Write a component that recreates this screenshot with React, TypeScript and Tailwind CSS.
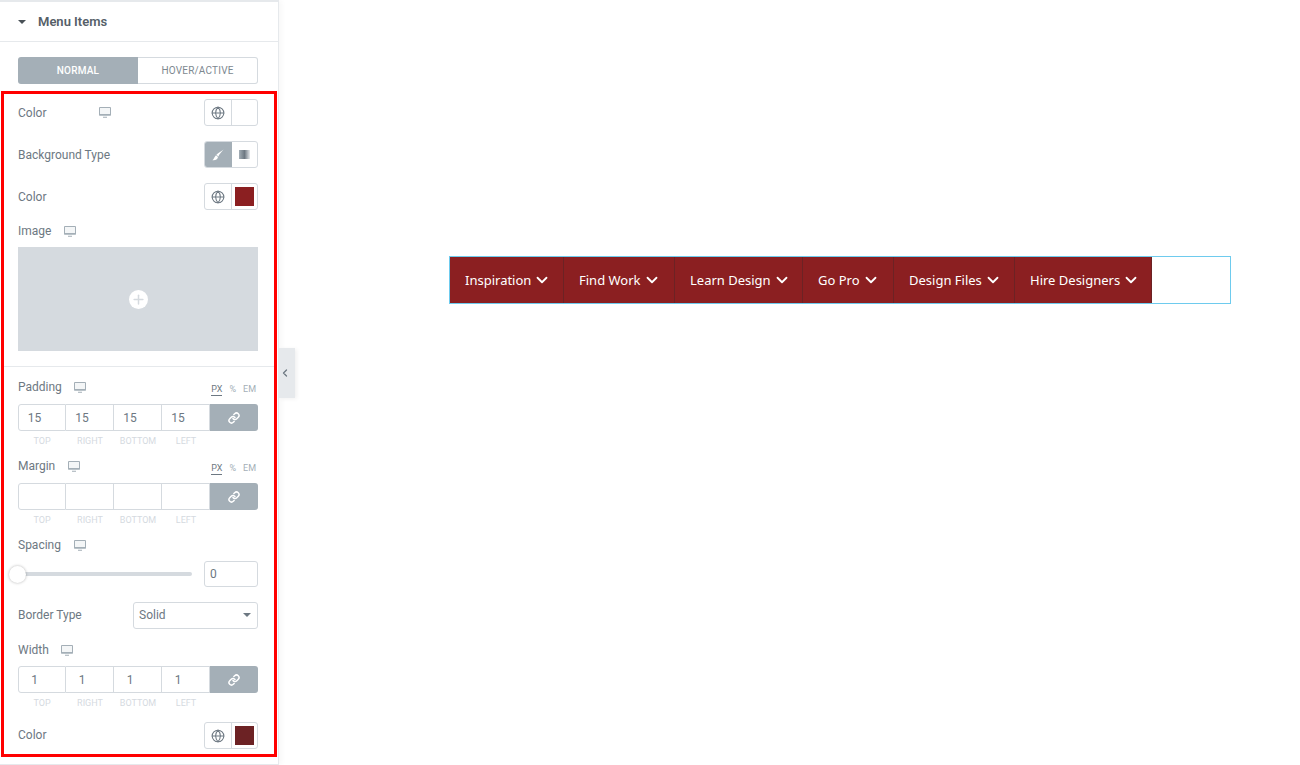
import { ChevronDown, ChevronLeft, Globe, Link as LinkIcon, Plus } from 'lucide-react';

const navItems = [
    { label: 'Inspiration', width: 'w-[114px]' },
    { label: 'Find Work', width: 'w-[111px]' },
    { label: 'Learn Design', width: 'w-[128px]' },
    { label: 'Go Pro', width: 'w-[91px]' },
    { label: 'Design Files', width: 'w-[121px]' },
    { label: 'Hire Designers', width: 'w-[137px]' },
];

function Desktop({ className = '' }: { className?: string }) {
    return (
        <svg viewBox="0 0 12 11" className={`h-[11px] w-[12px] ${className}`}>
            <path d="M0.5 0.5h11v7.5h-11z" fill="#f4f6f7" stroke="#a4afb7" strokeWidth="1" />
            <path d="M0 7h12v1.5H0zM4 9.8h4v1H4z" fill="#a4afb7" />
        </svg>
    );
}

function Label({ children, desktop, gap = 'ml-[13px]' }: { children: string; desktop?: boolean; gap?: string }) {
    return (
        <div className="flex items-center text-xs leading-[14px] text-[#6d7882]">
            <span>{children}</span>
            {desktop && <Desktop className={gap} />}
        </div>
    );
}

function ColorControl({ swatch }: { swatch?: string }) {
    return (
        <div className="flex h-[27px] w-[54px] rounded-[3px] border border-[#d5dadf] bg-white">
            <div className="flex w-[27px] items-center justify-center border-r border-[#d5dadf]">
                <Globe size={14} strokeWidth={1.8} className="text-[#6d7882]" />
            </div>
            <div className="flex flex-1 items-center justify-center">
                {swatch === 'brand' && <div className="h-[19px] w-[19px] bg-[#8b1f21]" />}
                {swatch === 'dark' && <div className="h-[19px] w-[19px] bg-[#6c2224]" />}
            </div>
        </div>
    );
}

function Units() {
    return (
        <div className="mt-[5px] flex gap-[7px] pr-[2px] text-[9px] leading-[11px] text-[#a4afb7]">
            <span className="border-b border-[#6d7882] text-[#6d7882]">PX</span>
            <span>%</span>
            <span>EM</span>
        </div>
    );
}

function Dimensions({ value }: { value?: string }) {
    return (
        <div>
            <div className="flex h-[27px] w-[240px]">
                {[0, 1, 2, 3].map((i) => (
                    <div
                        key={i}
                        className={`flex w-[48px] items-center justify-center border-y border-r border-[#d5dadf] pr-[15px] text-xs text-[#6d7882] ${i === 0 ? 'rounded-l-[3px] border-l' : ''}`}
                    >
                        {value}
                    </div>
                ))}
                <div className="flex w-[48px] items-center justify-center rounded-r-[3px] bg-[#a4afb7]">
                    <LinkIcon size={12} strokeWidth={3} className="text-white" />
                </div>
            </div>
            <div className="mt-[5px] flex w-[192px] text-center text-[9px] leading-[11px] text-[#d5dadf]">
                <span className="w-[48px]">TOP</span>
                <span className="w-[48px]">RIGHT</span>
                <span className="w-[48px]">BOTTOM</span>
                <span className="w-[48px]">LEFT</span>
            </div>
        </div>
    );
}

export default function App() {
    return (
        <div className="relative flex h-[765px] w-[1300px] overflow-hidden bg-white font-['Roboto',sans-serif]">
            <aside className="h-[765px] w-[279px] shrink-0 border-r border-[#e6e9ec] pt-[2px] shadow-[2px_0_6px_rgba(0,0,0,0.04)]">
                <div className="absolute left-0 top-0 h-[2px] w-[279px] bg-[#e6e9ec]" />

                <div className="flex h-[40px] items-center border-b border-[#e6e9ec] pl-[18px]">
                    <div className="h-0 w-0 border-x-[4px] border-t-[4px] border-x-transparent border-t-[#495157]" />
                    <span className="ml-[12px] text-[13px] font-semibold text-[#556068]">Menu Items</span>
                </div>

                <div className="ml-[18px] mt-[15px] flex h-[27px] w-[240px] text-[10px] font-medium uppercase tracking-[0.2px]">
                    <div className="flex w-[120px] items-center justify-center rounded-l-[3px] bg-[#a4afb7] text-white">Normal</div>
                    <div className="flex w-[120px] items-center justify-center rounded-r-[3px] border border-l-0 border-[#d5dadf] font-normal text-[#7d8890]">Hover/Active</div>
                </div>

                <div className="ml-[1px] mt-[7px] h-[666px] w-[276px] border-[3px] border-[#ff0000]">
                    <div className="pl-[14px] pr-[16px] pt-[5px]">
                        <div className="flex h-[27px] items-center justify-between">
                            <div className="flex items-center text-xs text-[#6d7882]">
                                <span className="w-[81px]">Color</span>
                                <Desktop />
                            </div>
                            <ColorControl />
                        </div>

                        <div className="mt-[15px] flex h-[27px] items-center justify-between">
                            <Label>Background Type</Label>
                            <div className="flex h-[27px] w-[54px] overflow-hidden rounded-[3px] border border-[#d5dadf]">
                                <div className="-my-px -ml-px flex w-[28px] items-center justify-center bg-[#a4afb7]">
                                    <svg viewBox="0 0 12 12" className="h-[12px] w-[12px]">
                                        <path d="M11.6.6C9.5 3 7.5 5 6.4 7.4L4.4 5.7C6.5 4 9.5 2 11.6.6ZM4 6.2 6 8C5.5 10.5 3 11.8.4 11.2 2 10.4 2.5 7.3 4 6.2Z" fill="#fff" />
                                    </svg>
                                </div>
                                <div className="flex flex-1 items-center justify-center">
                                    <div className="h-[9px] w-[11px] bg-gradient-to-r from-[#a4afb7] via-[#6d7882] to-[#e6e9ec]" />
                                </div>
                            </div>
                        </div>

                        <div className="mt-[15px] flex h-[27px] items-center justify-between">
                            <Label>Color</Label>
                            <ColorControl swatch="brand" />
                        </div>

                        <div className="mt-[14px]">
                            <Label desktop>Image</Label>
                        </div>

                        <div className="mt-[9px] flex h-[104px] w-[240px] items-center justify-center bg-[#d5dadf]">
                            <div className="flex h-[19px] w-[19px] items-center justify-center rounded-full bg-white">
                                <Plus size={15} strokeWidth={2.4} className="text-[#d5dadf]" />
                            </div>
                        </div>
                    </div>

                    <div className="mt-[15px] h-px bg-[#e6e9ec]" />

                    <div className="pl-[14px] pr-[16px]">
                        <div className="mt-[13px] flex h-[14px] items-center justify-between">
                            <Label desktop gap="ml-[12px]">Padding</Label>
                            <Units />
                        </div>
                        <div className="mt-[10px]">
                            <Dimensions value="15" />
                        </div>

                        <div className="mt-[12px] flex h-[14px] items-center justify-between">
                            <Label desktop>Margin</Label>
                            <Units />
                        </div>
                        <div className="mt-[10px]">
                            <Dimensions />
                        </div>

                        <div className="mt-[12px]">
                            <Label desktop>Spacing</Label>
                        </div>
                        <div className="mt-[9px] flex h-[26px] items-center justify-between">
                            <div className="relative h-[4px] w-[174px] rounded-[2px] bg-[#d5dadf]">
                                <div className="absolute left-[-9px] top-[-6.5px] h-[17px] w-[17px] rounded-full bg-white shadow-[0_0_3px_rgba(0,0,0,0.3)]" />
                            </div>
                            <div className="flex h-[26px] w-[54px] items-center rounded-[3px] border border-[#d5dadf] pl-[5px] text-xs text-[#6d7882]">0</div>
                        </div>

                        <div className="mt-[15px] flex h-[27px] items-center justify-between">
                            <div className="pb-[2px]">
                                <Label>Border Type</Label>
                            </div>
                            <div className="flex h-[27px] w-[125px] items-center justify-between rounded-[3px] border border-[#d5dadf] pb-[2px] pl-[5px] pr-[6px] text-xs text-[#6d7882]">
                                <span>Solid</span>
                                <div className="h-0 w-0 border-x-[4px] border-t-[4px] border-x-transparent border-t-[#6d7882]" />
                            </div>
                        </div>

                        <div className="mt-[14px]">
                            <Label desktop gap="ml-[12px]">Width</Label>
                        </div>
                        <div className="mt-[9px]">
                            <Dimensions value="1" />
                        </div>

                        <div className="mt-[13px] flex h-[27px] items-center justify-between">
                            <div className="pb-[2px]">
                                <Label>Color</Label>
                            </div>
                            <ColorControl swatch="dark" />
                        </div>
                    </div>
                </div>

                <div className="mt-[7px] h-px bg-[#e6e9ec]" />
            </aside>

            {/* collapse handle sits over the canvas edge */}
            <div className="absolute left-[279px] top-[348px] flex h-[50px] w-[16px] items-center justify-center bg-[#e6e9ec] pr-[4px] shadow-[2px_1px_4px_rgba(0,0,0,0.06)]">
                <ChevronLeft size={14} strokeWidth={2.6} className="text-[#6d7882]" />
            </div>

            <main className="flex-1 pl-[170px] pt-[256px]">
                <nav className="h-[48px] w-[782px] border border-[#6ecbee]">
                    <ul className="flex h-[46px]">
                        {navItems.map((item) => (
                            <li
                                key={item.label}
                                className={`flex ${item.width} items-center border-r border-[#6c2224] bg-[#8b1f21] pl-[15px] font-['Noto_Sans',sans-serif] text-[13px] text-white`}
                            >
                                <span className="pt-[2px]">{item.label}</span>
                                <ChevronDown size={18} strokeWidth={2.4} className="ml-[2px]" />
                            </li>
                        ))}
                    </ul>
                </nav>
            </main>
        </div>
    );
}
